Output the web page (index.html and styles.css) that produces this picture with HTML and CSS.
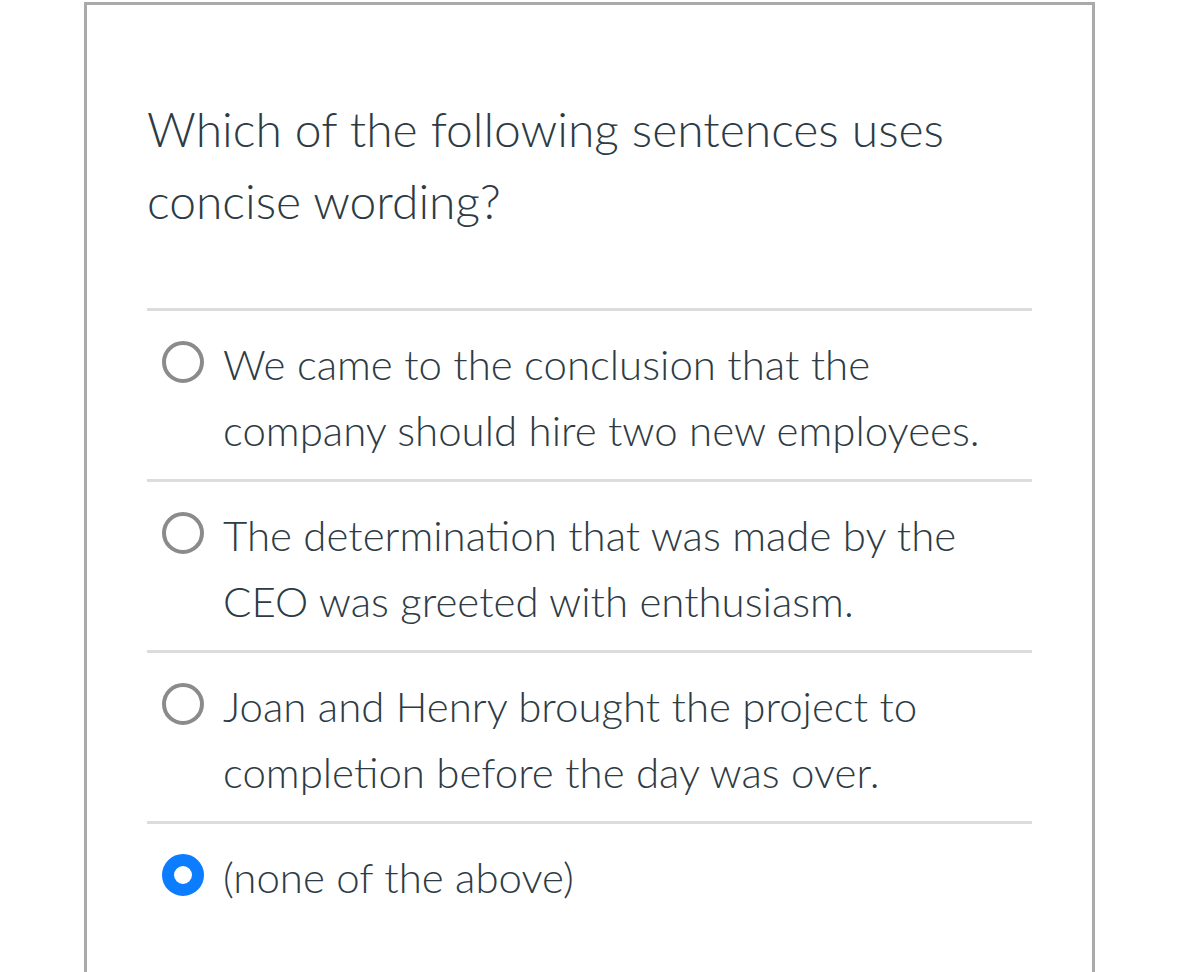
FILE: index.html
```html
<!DOCTYPE html>
<html lang="en">
<head>
  <meta charset="UTF-8" />
  <meta name="viewport" content="width=device-width, initial-scale=1.0" />
  <title>Quiz Question</title>
  <link rel="stylesheet" href="styles.css">
</head>
<body>
  <div class="question-card">
    <div class="question-text">Which of the following sentences uses concise wording?</div>
    <div class="answers">
      <label class="answer">
        <span class="radio"></span>
        <span class="answer-text">We came to the conclusion that the company should hire two new employees.</span>
      </label>
      <label class="answer">
        <span class="radio"></span>
        <span class="answer-text">The determination that was made by the CEO was greeted with enthusiasm.</span>
      </label>
      <label class="answer">
        <span class="radio"></span>
        <span class="answer-text">Joan and Henry brought the project to completion before the day was over.</span>
      </label>
      <label class="answer">
        <span class="radio checked"></span>
        <span class="answer-text">(none of the above)</span>
      </label>
    </div>
  </div>
</body>
</html>
```

FILE: styles.css
```css
body {
  margin: 0;
  font-family: Lato, "Noto Sans", sans-serif;
  font-weight: 300;
  color: #2d3b45;
  background: #ffffff;
  overflow: hidden;
}
.question-card {
  box-sizing: border-box;
  margin: 2px 0 0 84px;
  width: 1011px;
  min-height: 1000px;
  border: 3px solid #aaaaaa;
  border-bottom: none;
  padding: 88px 60px 0 60px;
}
.question-text {
  font-size: 48px;
  line-height: 72px;
  max-width: 860px;
}
.answers {
  margin-top: 71px;
}
.answer {
  display: flex;
  align-items: flex-start;
  gap: 19px;
  border-top: 3px solid #dcdcdc;
  padding: 20px 0 16px 15px;
  font-size: 42px;
  line-height: 66px;
}
.radio {
  flex: none;
  box-sizing: border-box;
  width: 42px;
  height: 42px;
  margin-top: 10px;
  border-radius: 50%;
  border: 4px solid #8b8b8b;
  background: #ffffff;
}
.radio.checked {
  border: 12px solid #0b7dfe;
}
.answer-text {
  flex: 1;
  padding-right: 40px;
}
```
